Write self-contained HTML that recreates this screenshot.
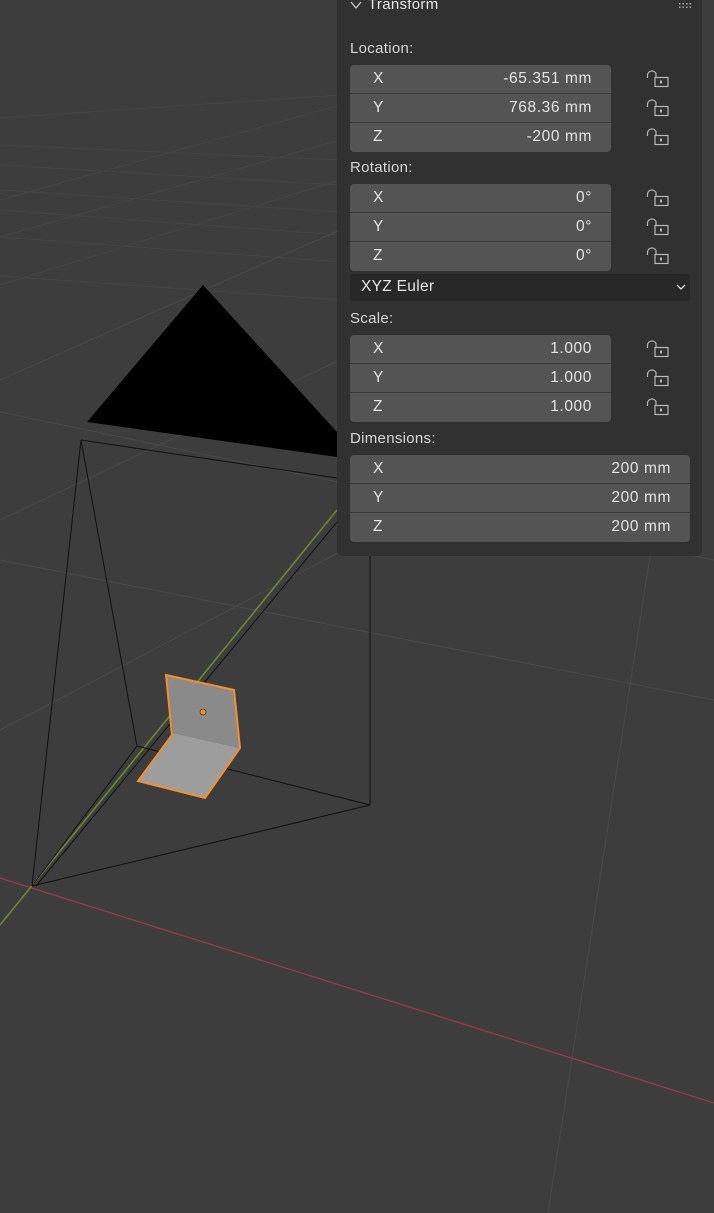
<!DOCTYPE html>
<html><head><meta charset="utf-8"><style>
*{margin:0;padding:0;box-sizing:border-box}
body{width:714px;height:1213px;overflow:hidden;background:#3d3d3d;font-family:"Liberation Sans",sans-serif;position:relative}
svg.vp{position:absolute;left:0;top:0}
.panel{position:absolute;left:337px;top:0;width:365px;height:556px;background:rgba(48,48,48,0.93);border-radius:0 0 6px 6px}
.t{position:absolute;color:#d6d6d6;font-size:15px;letter-spacing:0.3px}
.grp{position:absolute;left:13px;width:261px;background:#545454;border-radius:4px;overflow:hidden}
.row{height:29px;position:relative;border-bottom:1px solid #3a3a3a;color:#e4e4e4;font-size:15.5px;line-height:28px;letter-spacing:0.6px}
.row:last-child{border-bottom:none}
.row .l{position:absolute;left:23px}
.row .v{position:absolute;right:19px}
</style></head><body>
<svg class="vp" width="714" height="1213" viewBox="0 0 714 1213">
<g stroke="#454545" stroke-width="1" fill="none">
<line x1="0" y1="145" x2="340" y2="160"/><line x1="0" y1="165" x2="340" y2="185"/>
<line x1="0" y1="190" x2="340" y2="212"/><line x1="0" y1="210" x2="340" y2="235"/>
<line x1="0" y1="237" x2="340" y2="262"/><line x1="0" y1="276" x2="340" y2="300"/>
<line x1="0" y1="118" x2="340" y2="95"/><line x1="0" y1="200" x2="340" y2="105"/>
<line x1="0" y1="237" x2="340" y2="140"/><line x1="0" y1="285" x2="340" y2="180"/>
</g>
<g stroke="#4a4a4a" stroke-width="1" fill="none">
<line x1="0" y1="412" x2="714" y2="560"/><line x1="0" y1="560" x2="714" y2="700"/>
<line x1="0" y1="380" x2="340" y2="230"/><line x1="0" y1="520" x2="340" y2="360"/>
<line x1="0" y1="730" x2="420" y2="510"/>
<line x1="650" y1="556" x2="548" y2="1213"/>
</g>
<line x1="0" y1="878" x2="714" y2="1103" stroke="#9a3a48" stroke-width="1.3"/>
<line x1="0" y1="925" x2="337" y2="510" stroke="#6a8a2e" stroke-width="1.6"/>
<polygon points="203,285 87,422 337,457 337,432" fill="#000"/>
<g stroke="#111" stroke-width="1" fill="none">
<line x1="81" y1="440" x2="337" y2="478"/>
<line x1="81" y1="440" x2="32" y2="886"/>
<line x1="81" y1="440" x2="137" y2="746"/>
<line x1="137" y1="746" x2="370" y2="805"/>
<line x1="370" y1="556" x2="370" y2="805"/>
<line x1="32" y1="886" x2="370" y2="805"/>
<line x1="32" y1="886" x2="137" y2="746"/>
<line x1="36" y1="886" x2="337" y2="522"/>
</g>
<polygon points="166,675 234,690 240,748 173,733" fill="#8a8a8a"/>
<polygon points="173,733 240,748 205,798 138,781" fill="#9d9d9d"/>
<polygon points="166,675 234,690 240,748 205,798 138,781 172,735" fill="none" stroke="#f2902a" stroke-width="2"/>
<circle cx="203" cy="712" r="3" fill="#f2902a" stroke="#222" stroke-width="0.6"/>
</svg>
<div class="panel">
<svg style="position:absolute;left:13px;top:0" width="14" height="12"><path d="M1 2 L6 8 L11 2" stroke="#ccc" stroke-width="1.3" fill="none"/></svg>
<div class="t" style="left:31px;top:-4px;color:#e6e6e6">Transform</div>
<div style="position:absolute;left:341px;top:2px;width:14px;height:7px;background-image:radial-gradient(#aaa 0.8px,transparent 1px);background-size:3.5px 3.5px"></div>
<div class="t" style="left:13px;top:40px">Location:</div>
<div class="grp" style="top:65px"><div class="row"><span class="l">X</span><span class="v">-65.351 mm</span></div><div class="row"><span class="l">Y</span><span class="v">768.36 mm</span></div><div class="row"><span class="l">Z</span><span class="v">-200 mm</span></div></div>
<div class="t" style="left:13px;top:159px">Rotation:</div>
<div class="grp" style="top:184px"><div class="row"><span class="l">X</span><span class="v">0°</span></div><div class="row"><span class="l">Y</span><span class="v">0°</span></div><div class="row"><span class="l">Z</span><span class="v">0°</span></div></div>
<div style="position:absolute;left:13px;top:274px;width:340px;height:27px;background:#282828;border-radius:4px;color:#e6e6e6;font-size:15.5px;line-height:26px;padding-left:11px;letter-spacing:0.3px">XYZ Euler
<svg style="position:absolute;right:4px;top:9px" width="10" height="8"><path d="M1 2 L5 6 L9 2" stroke="#ddd" stroke-width="1.3" fill="none"/></svg></div>
<div class="t" style="left:13px;top:310px">Scale:</div>
<div class="grp" style="top:335px"><div class="row"><span class="l">X</span><span class="v">1.000</span></div><div class="row"><span class="l">Y</span><span class="v">1.000</span></div><div class="row"><span class="l">Z</span><span class="v">1.000</span></div></div>
<div class="t" style="left:13px;top:430px">Dimensions:</div>
<div class="grp" style="top:455px;width:340px"><div class="row"><span class="l">X</span><span class="v">200 mm</span></div><div class="row"><span class="l">Y</span><span class="v">200 mm</span></div><div class="row"><span class="l">Z</span><span class="v">200 mm</span></div></div>
</div>
<svg style="position:absolute;left:0;top:0" width="714" height="1213">
<defs><g id="lk" fill="none" stroke="#b8b8b8" stroke-width="1.2"><path d="M647.5 78 V75 A4.5 4.5 0 0 1 656 73.5 V77"/><rect x="655" y="77.5" width="13" height="9"/><rect x="660" y="80.5" width="2" height="3" fill="#b8b8b8" stroke="none"/></g></defs>
<use href="#lk"/><use href="#lk" y="29"/><use href="#lk" y="58"/>
<use href="#lk" y="119"/><use href="#lk" y="148"/><use href="#lk" y="177"/>
<use href="#lk" y="270"/><use href="#lk" y="299"/><use href="#lk" y="328"/>
</svg>
</body></html>
